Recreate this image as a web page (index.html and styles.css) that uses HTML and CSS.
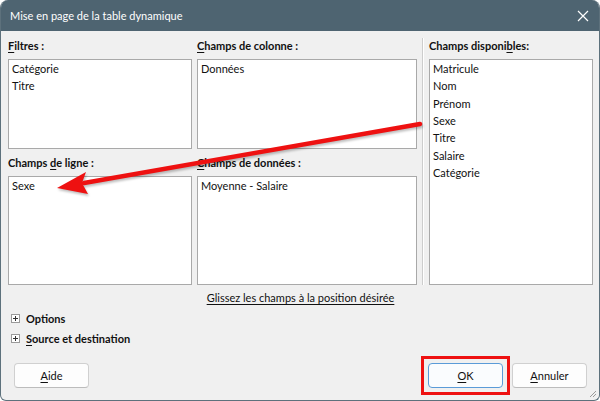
FILE: index.html
```html
<!DOCTYPE html>
<html lang="fr">
  <head>
    <meta charset="UTF-8" />
    <title>Mise en page de la table dynamique</title>
    <link rel="stylesheet" href="styles.css">
  </head>
  <body>
    <div class="window">
      <div class="titlebar">
        <span class="title">Mise en page de la table dynamique</span>
        <svg class="close" width="12" height="12" viewBox="0 0 12 12">
          <path d="M1 1 L11 11 M11 1 L1 11" stroke="#ffffff" stroke-width="1.2" fill="none" />
        </svg>
      </div>

      <div class="content">
        <div class="fields">
          <div class="label l-filters"><u>F</u>iltres :</div>
          <div class="label l-cols"><u>C</u>hamps de colonne :</div>
          <div class="label l-avail">Champs disponi<u>b</u>les:</div>

          <ul class="list filters">
            <li>Catégorie</li>
            <li>Titre</li>
          </ul>
          <ul class="list cols">
            <li>Données</li>
          </ul>
          <div class="separator"></div>
          <ul class="list avail">
            <li>Matricule</li>
            <li>Nom</li>
            <li>Prénom</li>
            <li>Sexe</li>
            <li>Titre</li>
            <li>Salaire</li>
            <li>Catégorie</li>
          </ul>

          <div class="label low l-rows">Champs <u>d</u>e ligne :</div>
          <div class="label low l-data"><u>C</u>hamps de données :</div>
          <ul class="list rows">
            <li>Sexe</li>
          </ul>
          <ul class="list data">
            <li>Moyenne - Salaire</li>
          </ul>
        </div>

        <div class="hint"><span>Glissez les champs à la position désirée</span></div>

        <div class="expanders">
          <div class="expander">
            <span class="plus"></span>
            <span class="exp-label">Options</span>
          </div>
          <div class="expander">
            <span class="plus"></span>
            <span class="exp-label"><u>S</u>ource et destination</span>
          </div>
        </div>

        <div class="buttons">
          <button class="btn"><u>A</u>ide</button>
          <div class="spacer"></div>
          <span class="highlight">
            <button class="btn btn-default"><u>O</u>K</button>
          </span>
          <button class="btn"><u>A</u>nnuler</button>
        </div>
      </div>

      <svg class="grip" width="8" height="8" viewBox="0 0 8 8">
        <path d="M7 1 L1 7 M7 4 L4 7" stroke="#9a9a9a" stroke-width="1" fill="none" />
      </svg>

      <!-- flèche d'annotation -->
      <svg class="arrow" width="600" height="401" viewBox="0 0 600 401">
        <line x1="420" y1="124" x2="84" y2="183" stroke="#ee1111" stroke-width="4.5" stroke-linecap="round" />
        <polygon points="57,188 86,172 82,183 88,194" fill="#ee1111" />
      </svg>
    </div>
  </body>
</html>
```

FILE: styles.css
```css
* {
  box-sizing: border-box;
}

body {
  margin: 0;
  background: #ffffff;
  font-family: Lato, "Noto Sans", sans-serif;
  font-size: 11px;
  color: #111111;
}

.window {
  position: relative;
  width: 600px;
  height: 401px;
  background: #f0f0f0;
  border: 1px solid #5d717c;
  border-top: none;
  border-radius: 8px 8px 6px 6px;
  overflow: hidden;
}

/* barre de titre */
.titlebar {
  height: 31px;
  background: #4e6471;
  color: #ffffff;
  display: flex;
  align-items: center;
  justify-content: space-between;
  padding: 0 10px 0 9px;
  font-size: 11px;
}

.content {
  padding: 7px 6px 0 7px;
}

u {
  text-decoration: underline;
  text-underline-offset: 2px;
}

/* zone des champs */
.fields {
  display: grid;
  grid-template-columns: 184px 5px 220px 12px 164px;
  grid-template-rows: 21px 90px 27px 109px;
}

.label {
  font-weight: bold;
  line-height: 16px;
}

.label.low {
  padding-top: 6px;
}

.l-filters { grid-column: 1; grid-row: 1; }
.l-cols { grid-column: 3; grid-row: 1; }
.l-avail { grid-column: 5; grid-row: 1; }
.l-rows { grid-column: 1; grid-row: 3; }
.l-data { grid-column: 3; grid-row: 3; }

.list {
  margin: 0;
  padding: 0 3px;
  list-style: none;
  background: #ffffff;
  border: 1px solid #a9a9a9;
}

.list li {
  line-height: 17.33px;
}

.filters { grid-column: 1; grid-row: 2; }
.cols { grid-column: 3; grid-row: 2; }
.avail { grid-column: 5; grid-row: 2 / 5; }
.rows { grid-column: 1; grid-row: 4; }
.data { grid-column: 3; grid-row: 4; }

.separator {
  grid-column: 4;
  grid-row: 1 / 5;
  justify-self: center;
  width: 2px;
  border-left: 1px solid #cdcdcd;
  border-right: 1px solid #ffffff;
}

.hint {
  margin-top: 5px;
  text-align: center;
  line-height: 16px;
}

.hint span {
  text-decoration: underline;
  text-underline-offset: 2px;
}

/* sections dépliables */
.expanders {
  margin-top: 2px;
}

.expander {
  height: 20px;
  display: flex;
  align-items: center;
  padding-left: 3px;
}

.plus {
  position: relative;
  width: 9px;
  height: 9px;
  border: 1px solid #9a9a9a;
  background: #ffffff;
  margin-right: 6px;
}

.plus::before,
.plus::after {
  content: "";
  position: absolute;
  background: #333333;
}

.plus::before {
  left: 1px;
  top: 3px;
  width: 5px;
  height: 1px;
}

.plus::after {
  left: 3px;
  top: 1px;
  width: 1px;
  height: 5px;
}

.exp-label {
  font-weight: bold;
}

/* boutons */
.buttons {
  display: flex;
  align-items: center;
  gap: 9px;
  margin: 15px 6px 0 6px;
}

.spacer {
  flex: 1;
}

.btn {
  flex: none;
  width: 75px;
  height: 25px;
  font-family: inherit;
  font-size: 11px;
  color: #111111;
  background: #fdfdfd;
  border: 1px solid #d0d0d0;
  border-bottom-color: #bcbcbc;
  border-radius: 4px;
  padding: 0;
}

.btn-default {
  display: block;
  border: 1px solid #5a9bd8;
  background: #fafcfe;
}

/* cadre rouge d'annotation */
.highlight {
  flex: none;
  margin: -7px;
  padding: 4px;
  border: 3px solid #ee1111;
}

.grip {
  position: absolute;
  right: 2px;
  bottom: 2px;
}

.arrow {
  position: absolute;
  left: -1px;
  top: 0;
  pointer-events: none;
  filter: drop-shadow(1px 2px 1px rgba(0, 0, 0, 0.25));
}
```
